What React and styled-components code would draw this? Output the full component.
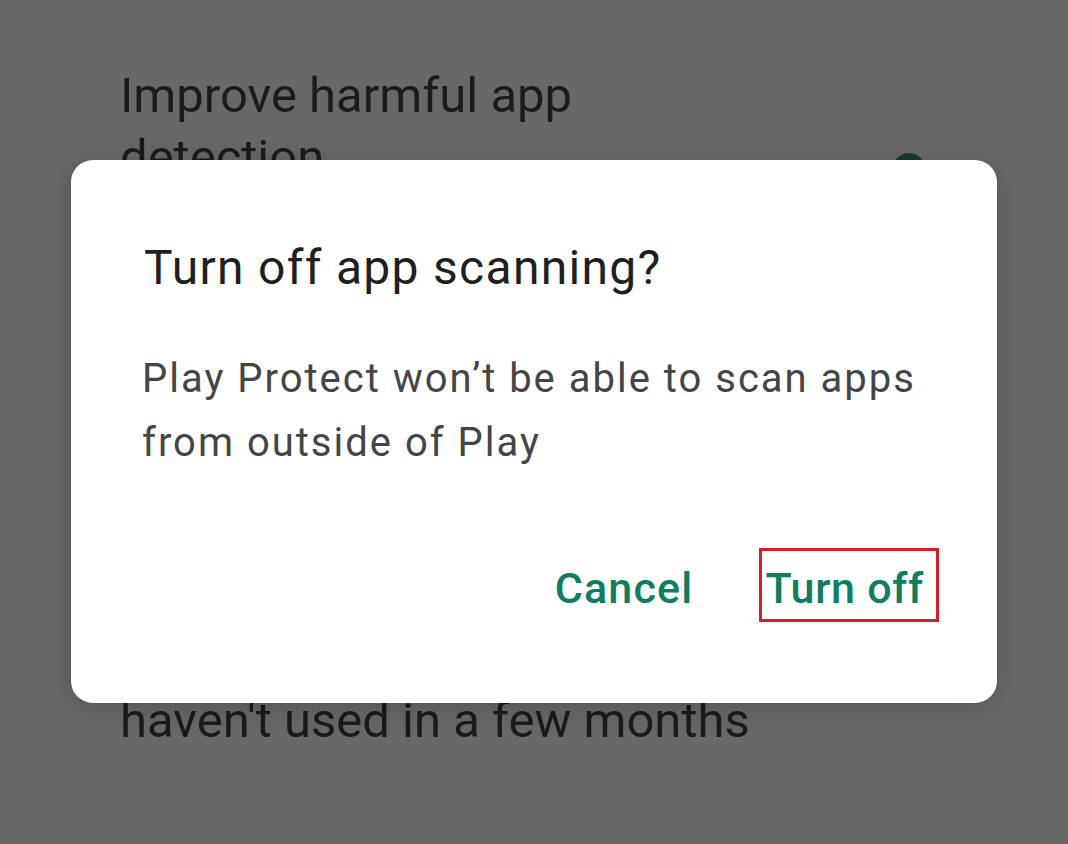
import React from "react";
import styled, { createGlobalStyle } from "styled-components";

const Global = createGlobalStyle`
  html, body { margin: 0; padding: 0; }
  body { background: #686868; font-family: Roboto, "Noto Sans", sans-serif; }
`;

const Screen = styled.div`
  position: relative;
  width: 1068px;
  height: 844px;
  overflow: hidden;
  background: #686868;
`;

const SettingsList = styled.div`
  display: flex;
  flex-direction: column;
  padding: 65px 0 0 120px;
`;

const SettingRow = styled.div`
  display: flex;
  align-items: flex-start;
  justify-content: space-between;
  padding-right: 143px;
  margin-bottom: ${(p) => p.$gap || 0}px;
`;

const SettingText = styled.div`
  font-size: 49px;
  line-height: 62px;
  color: #1b1b1b;
  white-space: nowrap;
`;

const Toggle = styled.div`
  width: 32px;
  height: 32px;
  margin-top: 88px;
  border-radius: 50%;
  background: #173a30;
`;

const Scrim = styled.div`
  position: absolute;
  inset: 0;
  display: flex;
  align-items: flex-start;
  justify-content: center;
  padding-top: 160px;
`;

const Dialog = styled.div`
  width: 926px;
  height: 543px;
  box-sizing: border-box;
  background: #ffffff;
  border-radius: 22px;
  box-shadow: 0 4px 30px rgba(0, 0, 0, 0.2);
  padding: 80px 74px 0 73px;
  display: flex;
  flex-direction: column;
`;

const Title = styled.h2`
  margin: 0;
  font-family: Roboto, sans-serif;
  font-weight: 400;
  font-size: 48px;
  line-height: 56px;
  letter-spacing: 1.3px;
  color: #1f1f1f;
`;

const Body = styled.p`
  margin: 51px 0 0 -2px;
  font-size: 40px;
  line-height: 64px;
  letter-spacing: 2px;
  color: #454545;
`;

const Actions = styled.div`
  display: flex;
  justify-content: flex-end;
  align-items: center;
  gap: 51px;
  margin-top: 73px;
  margin-right: -16px;
`;

const ActionButton = styled.button`
  background: none;
  font-family: Roboto, sans-serif;
  font-size: 43px;
  font-weight: 500;
  letter-spacing: ${(p) => (p.$highlight ? 0.7 : 1.2)}px;
  color: #0e7d60;
  padding: 11px 12px 5px 3px;
  border: 3px solid ${(p) => (p.$highlight ? "#d5202c" : "transparent")};
  line-height: 52px;
  cursor: pointer;
`;

export default function App() {
  return (
    <>
      <Global />
      <Screen>
        <SettingsList>
          <SettingRow $gap={439}>
            <SettingText>
              Improve harmful app
              <br />
              detection
            </SettingText>
            <Toggle />
          </SettingRow>
          <SettingRow>
            <SettingText>
              Remove permissions for apps you
              <br />
              haven't used in a few months
            </SettingText>
          </SettingRow>
        </SettingsList>
        <Scrim>
          <Dialog>
            <Title>Turn off app scanning?</Title>
            <Body>
              Play Protect won’t be able to scan apps
              <br />
              from outside of Play
            </Body>
            <Actions>
              <ActionButton>Cancel</ActionButton>
              <ActionButton $highlight>Turn off</ActionButton>
            </Actions>
          </Dialog>
        </Scrim>
      </Screen>
    </>
  );
}
